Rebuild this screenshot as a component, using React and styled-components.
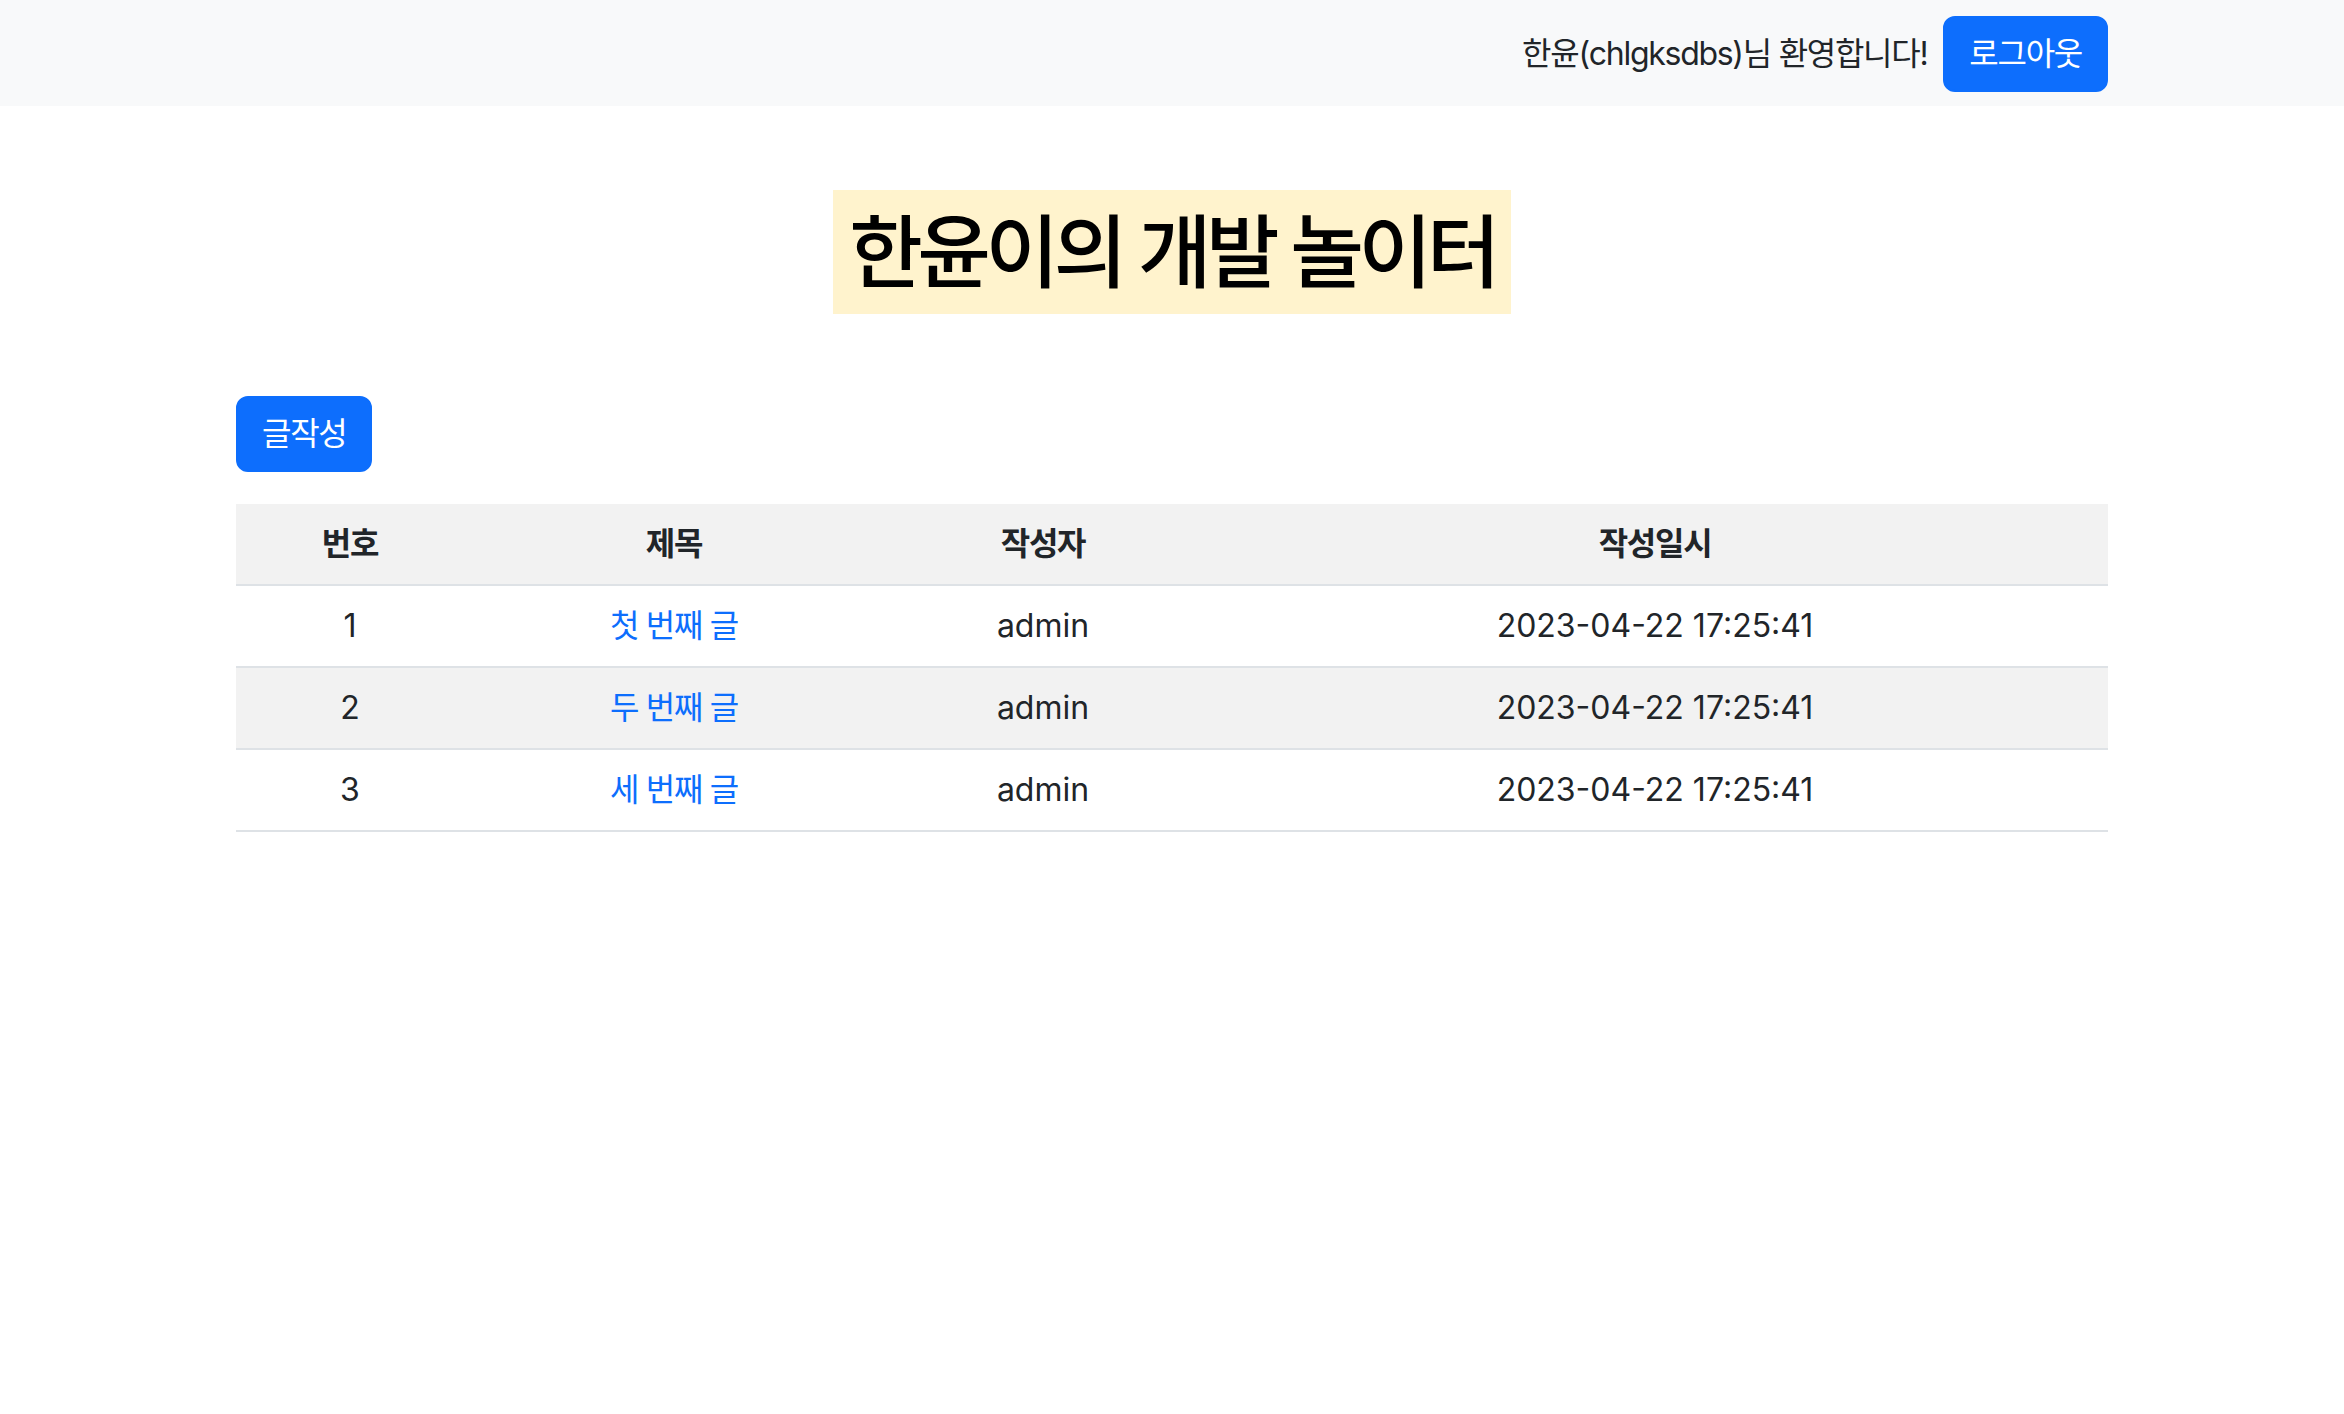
import React from 'react'
import styled, { createGlobalStyle } from 'styled-components'

// sizes are the bootstrap defaults doubled (the shot was taken at 2x)

const posts = [
  { id: 1, title: '첫 번째 글', writer: 'admin', date: '2023-04-22 17:25:41' },
  { id: 2, title: '두 번째 글', writer: 'admin', date: '2023-04-22 17:25:41' },
  { id: 3, title: '세 번째 글', writer: 'admin', date: '2023-04-22 17:25:41' },
]

const columns = [
  { label: '번호', width: 228 },
  { label: '제목', width: 420 },
  { label: '작성자', width: 318 },
  { label: '작성일시', width: 906 },
]

const App = () => {
  return (
    <>
      <GlobalStyle />
      <NavBar>
        <Container>
          <NavRight>
            <Welcome>한윤(chlgksdbs)님 환영합니다!</Welcome>
            <Button>로그아웃</Button>
          </NavRight>
        </Container>
      </NavBar>
      <Container>
        <TitleWrap>
          <Title>한윤이의 개발 놀이터</Title>
        </TitleWrap>
        <Button>글작성</Button>
        <Table>
          <colgroup>
            {columns.map(c => (
              <col key={c.label} width={c.width} />
            ))}
          </colgroup>
          <thead>
            <Row $gray>
              {columns.map(c => (
                <Th key={c.label}>{c.label}</Th>
              ))}
            </Row>
          </thead>
          <tbody>
            {posts.map(p => (
              <Row key={p.id} $gray={p.id % 2 === 0}>
                <Td>{p.id}</Td>
                <Td><TitleLink href="#">{p.title}</TitleLink></Td>
                <Td>{p.writer}</Td>
                <Td>{p.date}</Td>
              </Row>
            ))}
          </tbody>
        </Table>
      </Container>
    </>
  )
}

export default App

const GlobalStyle = createGlobalStyle`
  * {
    box-sizing: border-box;
  }
  body {
    margin: 0;
    background: #ffffff;
    color: #212529;
    font-family: Inter, "Noto Sans CJK KR", sans-serif;
    font-size: 32px;
    line-height: 1.5;
    font-feature-settings: "palt";
  }
`

const Container = styled.div`
  width: 1920px;
  margin: 0 auto;
  padding: 0 24px;
`

const NavBar = styled.nav`
  background: #f8f9fa;
  padding: 16px 0 14px;
`

const NavRight = styled.div`
  display: flex;
  justify-content: flex-end;
  align-items: center;
  gap: 16px;
`

const Welcome = styled.span`
  letter-spacing: -0.04em;
`

const Button = styled.button`
  background: #0d6efd;
  color: #ffffff;
  border: 2px solid #0d6efd;
  border-radius: 12px;
  padding: 12px 24px;
  font-family: inherit;
  font-size: 32px;
  line-height: 1.5;
  letter-spacing: -0.04em;
  cursor: pointer;
`

const TitleWrap = styled.div`
  text-align: center;
  margin: 84px 0 82px;
`

const Title = styled.h1`
  display: inline-block;
  margin: 0;
  padding: 14px 16px;
  background: #fff3cd;
  color: #000000;
  font-size: 80px;
  font-weight: 500;
  line-height: 96px;
  letter-spacing: -5.4px;
`

const Table = styled.table`
  width: 100%;
  margin-top: 32px;
  border-collapse: collapse;
  table-layout: fixed;
`

const Row = styled.tr`
  background: ${p => (p.$gray ? '#f2f2f2' : '#ffffff')};
`

const Th = styled.th`
  padding: 16px;
  border-bottom: 2px solid #dee2e6;
  font-weight: 700;
  text-align: center;
  letter-spacing: -0.04em;
`

const Td = styled.td`
  padding: 16px;
  border-bottom: 2px solid #dee2e6;
  text-align: center;
`

const TitleLink = styled.a`
  color: #0d6efd;
  text-decoration: none;
  letter-spacing: -0.04em;
`
